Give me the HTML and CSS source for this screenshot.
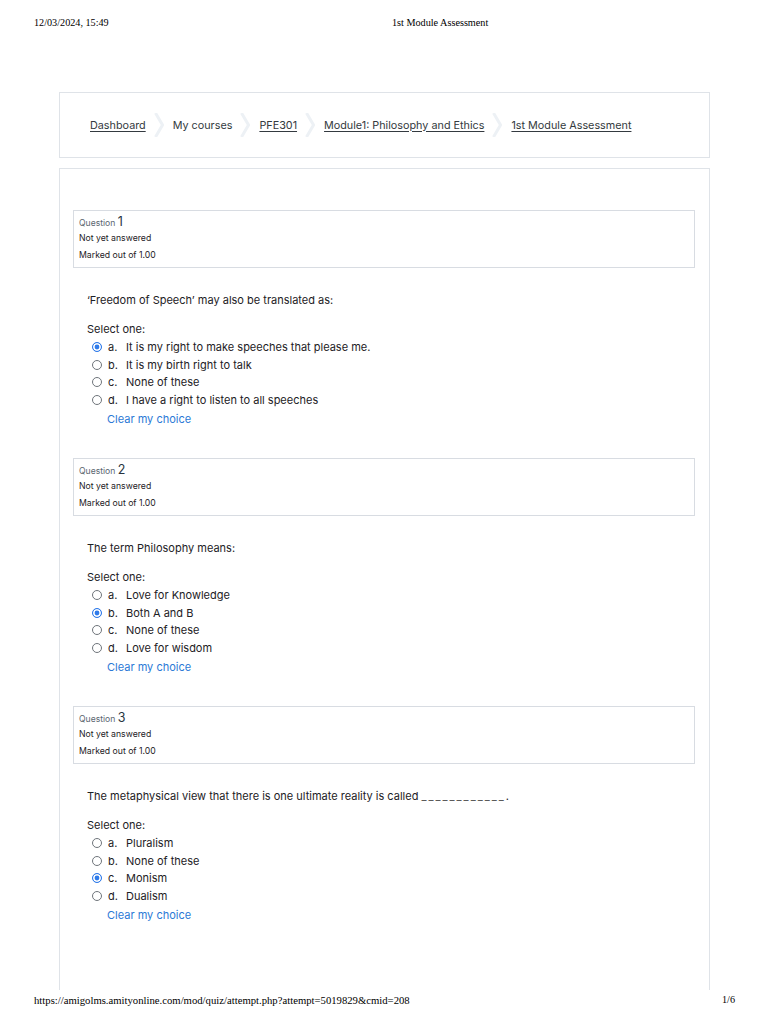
FILE: index.html
```html
<!DOCTYPE html>
<html lang="en">
<head>
<meta charset="utf-8">
<title>1st Module Assessment</title>
<link rel="stylesheet" href="styles.css">
</head>
<body>
<div class="sheet">
  <header class="print-head">
    <span class="ph-date">12/03/2024, 15:49</span>
    <span class="ph-title">1st Module Assessment</span>
  </header>

  <nav class="crumbs">
    <a class="crumb link">Dashboard</a>
    <svg class="sep" viewBox="0 0 10 24" width="10" height="24"><path d="M1.5 0 L8.5 12 L1.5 24" fill="none" stroke="#edf1f5" stroke-width="3"/></svg>
    <span class="crumb">My courses</span>
    <svg class="sep" viewBox="0 0 10 24" width="10" height="24"><path d="M1.5 0 L8.5 12 L1.5 24" fill="none" stroke="#edf1f5" stroke-width="3"/></svg>
    <a class="crumb link">PFE301</a>
    <svg class="sep" viewBox="0 0 10 24" width="10" height="24"><path d="M1.5 0 L8.5 12 L1.5 24" fill="none" stroke="#edf1f5" stroke-width="3"/></svg>
    <a class="crumb link">Module1: Philosophy and Ethics</a>
    <svg class="sep" viewBox="0 0 10 24" width="10" height="24"><path d="M1.5 0 L8.5 12 L1.5 24" fill="none" stroke="#edf1f5" stroke-width="3"/></svg>
    <a class="crumb link">1st Module Assessment</a>
  </nav>

  <main class="card">
    <section class="que">
      <div class="info">
        <div class="qno"><span class="qlabel">Question</span> <span class="qnum">1</span></div>
        <div class="istate">Not yet answered</div>
        <div class="istate">Marked out of 1.00</div>
      </div>
      <p class="qtext">‘Freedom of Speech’ may also be translated as:</p>
      <p class="prompt">Select one:</p>
      <div class="answers">
        <div class="opt"><span class="radio checked"></span><span class="letter">a.</span><span>It is my right to make speeches that please me.</span></div>
        <div class="opt"><span class="radio"></span><span class="letter">b.</span><span>It is my birth right to talk</span></div>
        <div class="opt"><span class="radio"></span><span class="letter">c.</span><span>None of these</span></div>
        <div class="opt"><span class="radio"></span><span class="letter">d.</span><span>I have a right to listen to all speeches</span></div>
      </div>
      <a class="clear">Clear my choice</a>
    </section>

    <section class="que">
      <div class="info">
        <div class="qno"><span class="qlabel">Question</span> <span class="qnum">2</span></div>
        <div class="istate">Not yet answered</div>
        <div class="istate">Marked out of 1.00</div>
      </div>
      <p class="qtext">The term Philosophy means:</p>
      <p class="prompt">Select one:</p>
      <div class="answers">
        <div class="opt"><span class="radio"></span><span class="letter">a.</span><span>Love for Knowledge</span></div>
        <div class="opt"><span class="radio checked"></span><span class="letter">b.</span><span>Both A and B</span></div>
        <div class="opt"><span class="radio"></span><span class="letter">c.</span><span>None of these</span></div>
        <div class="opt"><span class="radio"></span><span class="letter">d.</span><span>Love for wisdom</span></div>
      </div>
      <a class="clear">Clear my choice</a>
    </section>

    <section class="que">
      <div class="info">
        <div class="qno"><span class="qlabel">Question</span> <span class="qnum">3</span></div>
        <div class="istate">Not yet answered</div>
        <div class="istate">Marked out of 1.00</div>
      </div>
      <p class="qtext">The metaphysical view that there is one ultimate reality is called <span class="blank">____________</span>.</p>
      <p class="prompt">Select one:</p>
      <div class="answers">
        <div class="opt"><span class="radio"></span><span class="letter">a.</span><span>Pluralism</span></div>
        <div class="opt"><span class="radio"></span><span class="letter">b.</span><span>None of these</span></div>
        <div class="opt"><span class="radio checked"></span><span class="letter">c.</span><span>Monism</span></div>
        <div class="opt"><span class="radio"></span><span class="letter">d.</span><span>Dualism</span></div>
      </div>
      <a class="clear">Clear my choice</a>
    </section>
  </main>

  <footer class="print-foot">
    <span class="pf-url">https://amigolms.amityonline.com/mod/quiz/attempt.php?attempt=5019829&amp;cmid=208</span>
    <span>1/6</span>
  </footer>
</div>
</body>
</html>
```

FILE: styles.css
```css
* { box-sizing: border-box; }

html, body {
  margin: 0;
  padding: 0;
  background: #ffffff;
}

.sheet {
  width: 768px;
  height: 1024px;
  overflow: hidden;
  display: flex;
  flex-direction: column;
  font-family: Inter, "Noto Sans", sans-serif;
  color: #1d2125;
}

.print-head {
  height: 92px;
  padding: 17px 0 0 34px;
  display: grid;
  grid-template-columns: 358px auto;
  align-items: start;
  font-family: "Liberation Serif", "Times New Roman", serif;
  font-size: 10.2px;
  line-height: 12px;
  color: #000;
}

.crumbs {
  margin: 0 58px 0 59px;
  height: 66px;
  border: 1px solid #dfe3e8;
  display: flex;
  align-items: center;
  padding-left: 30px;
  font-size: 10.8px;
  color: #333a40;
}

.crumb { white-space: nowrap; }
.crumb.link { text-decoration: underline; text-underline-offset: 2px; color: #343a40; }

.sep {
  display: block;
  margin: 0 9px 0 8px;
  flex: none;
}

.card {
  margin: 10px 58px 0 59px;
  height: 822px;
  border: 1px solid #dfe3e8;
  border-bottom: none;
  padding: 41px 14px 0 13px;
}

.que { display: flex; flex-direction: column; align-items: flex-start; }

.info {
  align-self: stretch;
  height: 58px;
  border: 1px solid #d8dce2;
  padding: 2px 6px 0 5px;
  font-size: 8.7px;
  color: #1d2125;
}

.qno { height: 17px; line-height: 18px; }
.qlabel { color: #5b6670; font-size: 8.6px; }
.qnum { font-size: 12.5px; color: #283440; font-weight: 400; }
.istate { height: 17px; line-height: 17px; }

.qtext {
  margin: 24px 0 0 14px;
  font-size: 11px;
  line-height: 16px;
}

.blank { letter-spacing: 2px; color: #555; }

.prompt {
  margin: 13px 0 0 14px;
  font-size: 11px;
  line-height: 16px;
}

.answers {
  margin: 1px 0 0 19px;
  display: flex;
  flex-direction: column;
}

.opt {
  height: 17.5px;
  display: flex;
  align-items: center;
  font-size: 11px;
  color: #1d2125;
  padding-top: 1px;
}

.radio {
  width: 10px;
  height: 10px;
  border-radius: 50%;
  border: 1px solid #6f757b;
  flex: none;
  margin-right: 6px;
  background: #fff;
}

.radio.checked {
  border: 1.5px solid #2f7bea;
  background: #2f7bea;
  box-shadow: inset 0 0 0 1.6px #fff;
}

.letter { width: 18px; flex: none; }

.clear {
  margin: 3px 0 0 34px;
  font-size: 11px;
  line-height: 16px;
  color: #2b79d6;
  height: 47px;
}

.print-foot {
  margin-top: auto;
  height: 34px;
  padding: 4px 33px 0 34px;
  display: flex;
  justify-content: space-between;
  align-items: flex-start;
  font-family: "Liberation Serif", "Times New Roman", serif;
  font-size: 10.2px;
  line-height: 12px;
  color: #000;
}

.pf-url { font-size: 10.7px; }
```
